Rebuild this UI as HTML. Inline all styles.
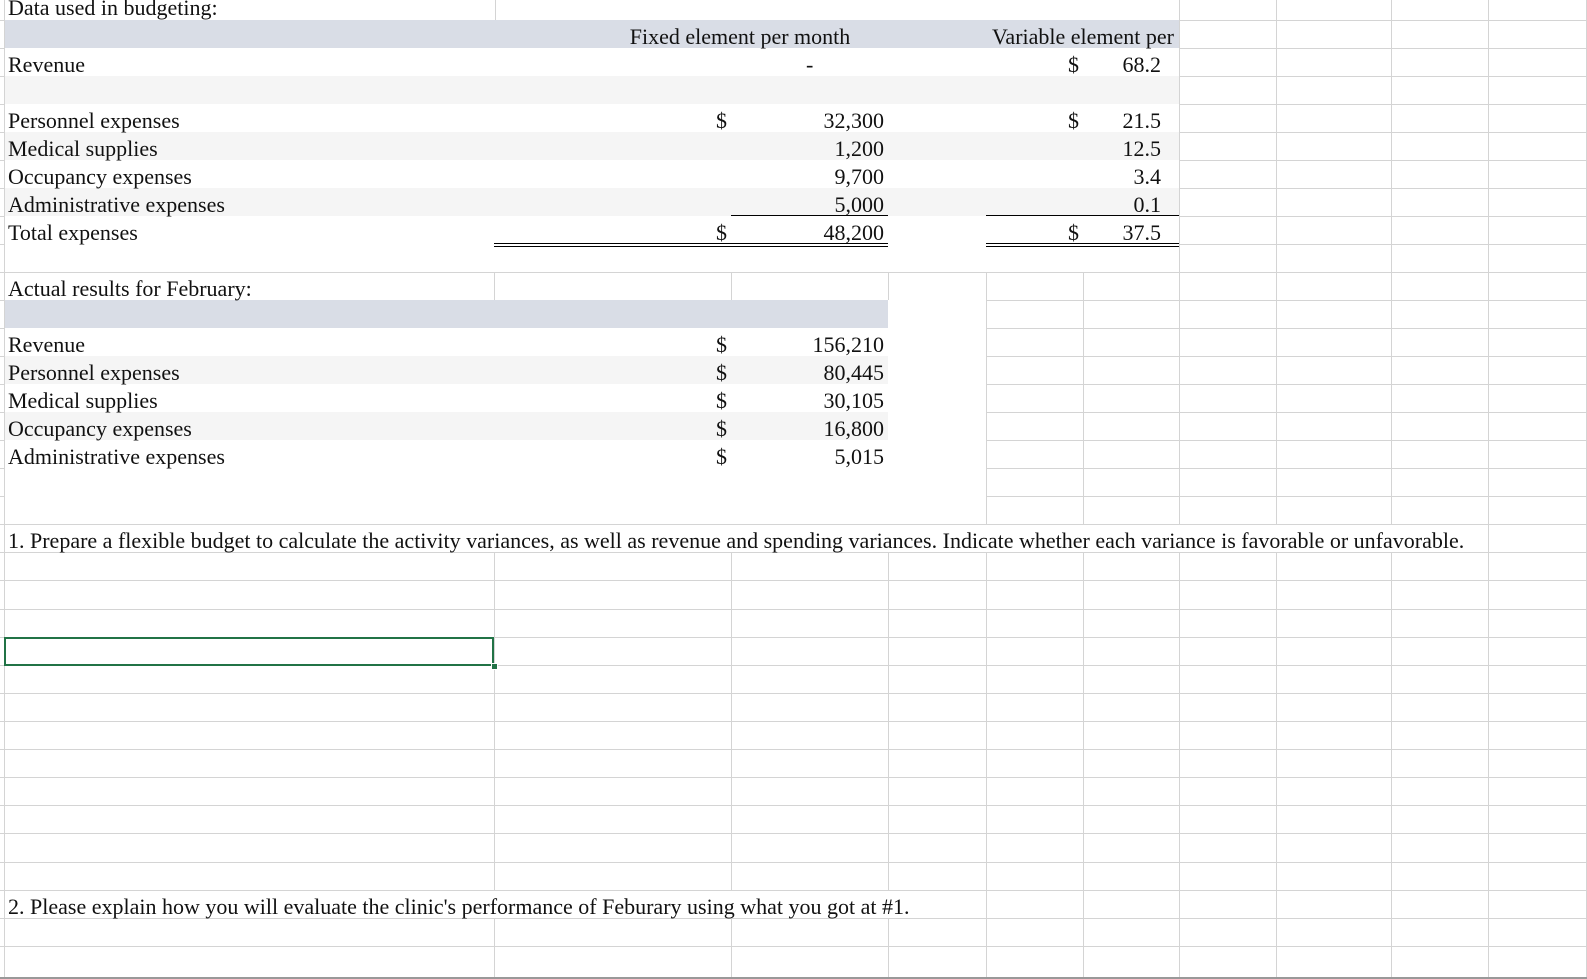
<!DOCTYPE html>
<html><head><meta charset="utf-8">
<style>
html,body{margin:0;padding:0;}
body{width:1587px;height:979px;position:relative;overflow:hidden;background:#fff;font-family:"Liberation Serif","Times New Roman",serif;font-size:22px;color:#111;}
.h{position:absolute;left:0;width:1587px;height:1px;background:#d4d4d4;}
.v{position:absolute;top:0;width:1px;height:979px;background:#d4d4d4;}
.w{position:absolute;background:#fff;}
.b{position:absolute;}
.t{position:absolute;height:28px;line-height:33px;white-space:nowrap;}
.r{text-align:right;}
.c{text-align:center;}
</style></head><body>
<div class="v" style="left:4px"></div>
<div class="v" style="left:494px"></div>
<div class="v" style="left:731px"></div>
<div class="v" style="left:888px"></div>
<div class="v" style="left:986px"></div>
<div class="v" style="left:1083px"></div>
<div class="v" style="left:1179px"></div>
<div class="v" style="left:1276px"></div>
<div class="v" style="left:1391px"></div>
<div class="v" style="left:1488px"></div>
<div class="v" style="left:1586px"></div>
<div class="h" style="top:20px"></div>
<div class="h" style="top:48px"></div>
<div class="h" style="top:76px"></div>
<div class="h" style="top:104px"></div>
<div class="h" style="top:132px"></div>
<div class="h" style="top:160px"></div>
<div class="h" style="top:188px"></div>
<div class="h" style="top:216px"></div>
<div class="h" style="top:244px"></div>
<div class="h" style="top:272px"></div>
<div class="h" style="top:300px"></div>
<div class="h" style="top:328px"></div>
<div class="h" style="top:356px"></div>
<div class="h" style="top:384px"></div>
<div class="h" style="top:412px"></div>
<div class="h" style="top:440px"></div>
<div class="h" style="top:468px"></div>
<div class="h" style="top:496px"></div>
<div class="h" style="top:524px"></div>
<div class="h" style="top:552px"></div>
<div class="h" style="top:580px"></div>
<div class="h" style="top:609px"></div>
<div class="h" style="top:637px"></div>
<div class="h" style="top:665px"></div>
<div class="h" style="top:693px"></div>
<div class="h" style="top:721px"></div>
<div class="h" style="top:749px"></div>
<div class="h" style="top:777px"></div>
<div class="h" style="top:805px"></div>
<div class="h" style="top:833px"></div>
<div class="h" style="top:862px"></div>
<div class="h" style="top:890px"></div>
<div class="h" style="top:918px"></div>
<div class="h" style="top:946px"></div>
<div class="h" style="top:977px;height:2px;background:#999"></div>

<div class="w" style="left:5px;top:0;width:1174px;height:272px"></div>
<div class="w" style="left:5px;top:273px;width:981px;height:251px"></div>
<div class="w" style="left:495px;top:0;width:1px;height:20px;background:#d4d4d4"></div>
<div class="b" style="left:494px;top:272px;width:1px;height:28px;background:#d4d4d4"></div>
<div class="b" style="left:731px;top:272px;width:1px;height:28px;background:#d4d4d4"></div>
<div class="b" style="left:888px;top:272px;width:1px;height:28px;background:#d4d4d4"></div>
<div class="b" style="left:986px;top:272px;width:1px;height:252px;background:#d4d4d4"></div>
<div class="b" style="left:986px;top:300px;width:193px;height:1px;background:#d4d4d4"></div>
<div class="w" style="left:5px;top:525px;width:1482px;height:27px"></div>
<div class="w" style="left:5px;top:891px;width:975px;height:27px"></div>

<div class="b" style="left:5px;top:20px;width:1174px;height:28px;background:#d9dde6"></div>
<div class="b" style="left:5px;top:76px;width:1174px;height:28px;background:#f5f5f5"></div>
<div class="b" style="left:5px;top:132px;width:1174px;height:28px;background:#f5f5f5"></div>
<div class="b" style="left:5px;top:188px;width:1174px;height:28px;background:#f5f5f5"></div>
<div class="b" style="left:5px;top:300px;width:883px;height:28px;background:#d9dde6"></div>
<div class="b" style="left:5px;top:356px;width:883px;height:28px;background:#f5f5f5"></div>
<div class="b" style="left:5px;top:412px;width:883px;height:28px;background:#f5f5f5"></div>

<div class="b" style="left:731px;top:215px;width:157px;height:1px;background:#000"></div>
<div class="b" style="left:986px;top:215px;width:193px;height:1px;background:#000"></div>
<div class="b" style="left:494px;top:243px;width:394px;height:4px;border-top:1px solid #000;border-bottom:1px solid #000;box-sizing:border-box"></div>
<div class="b" style="left:986px;top:243px;width:193px;height:4px;border-top:1px solid #000;border-bottom:1px solid #000;box-sizing:border-box"></div>

<div class="b" style="left:4px;top:637px;width:490px;height:29px;border:2px solid #217346;box-sizing:border-box"></div>
<div class="b" style="left:491px;top:663px;width:5px;height:5px;background:#217346;border:1px solid #fff"></div>

<div class="t" style="left:8px;top:-9px">Data used in budgeting:</div>
<div class="t c" style="left:590px;top:20px;width:300px">Fixed element per month</div>
<div class="t c" style="left:970px;top:20px;width:226px">Variable element per</div>

<div class="t" style="left:8px;top:48px">Revenue</div>
<div class="t" style="left:806px;top:48px">-</div>
<div class="t" style="left:1068px;top:48px">$</div>
<div class="t r" style="left:1080px;top:48px;width:81px">68.2</div>

<div class="t" style="left:8px;top:104px">Personnel expenses</div>
<div class="t" style="left:8px;top:132px">Medical supplies</div>
<div class="t" style="left:8px;top:160px">Occupancy expenses</div>
<div class="t" style="left:8px;top:188px">Administrative expenses</div>
<div class="t" style="left:8px;top:216px">Total expenses</div>

<div class="t" style="left:716px;top:104px">$</div>
<div class="t" style="left:716px;top:216px">$</div>
<div class="t r" style="left:760px;top:104px;width:124px">32,300</div>
<div class="t r" style="left:760px;top:132px;width:124px">1,200</div>
<div class="t r" style="left:760px;top:160px;width:124px">9,700</div>
<div class="t r" style="left:760px;top:188px;width:124px">5,000</div>
<div class="t r" style="left:760px;top:216px;width:124px">48,200</div>

<div class="t" style="left:1068px;top:104px">$</div>
<div class="t" style="left:1068px;top:216px">$</div>
<div class="t r" style="left:1080px;top:104px;width:81px">21.5</div>
<div class="t r" style="left:1080px;top:132px;width:81px">12.5</div>
<div class="t r" style="left:1080px;top:160px;width:81px">3.4</div>
<div class="t r" style="left:1080px;top:188px;width:81px">0.1</div>
<div class="t r" style="left:1080px;top:216px;width:81px">37.5</div>

<div class="t" style="left:8px;top:272px">Actual results for February:</div>

<div class="t" style="left:8px;top:328px">Revenue</div>
<div class="t" style="left:8px;top:356px">Personnel expenses</div>
<div class="t" style="left:8px;top:384px">Medical supplies</div>
<div class="t" style="left:8px;top:412px">Occupancy expenses</div>
<div class="t" style="left:8px;top:440px">Administrative expenses</div>
<div class="t" style="left:716px;top:328px">$</div>
<div class="t" style="left:716px;top:356px">$</div>
<div class="t" style="left:716px;top:384px">$</div>
<div class="t" style="left:716px;top:412px">$</div>
<div class="t" style="left:716px;top:440px">$</div>
<div class="t r" style="left:760px;top:328px;width:124px">156,210</div>
<div class="t r" style="left:760px;top:356px;width:124px">80,445</div>
<div class="t r" style="left:760px;top:384px;width:124px">30,105</div>
<div class="t r" style="left:760px;top:412px;width:124px">16,800</div>
<div class="t r" style="left:760px;top:440px;width:124px">5,015</div>

<div class="t" style="left:8px;top:524px">1. Prepare a flexible budget to calculate the activity variances, as well as revenue and spending variances. Indicate whether each variance is favorable or unfavorable.</div>
<div class="t" style="left:8px;top:890px">2. Please explain how you will evaluate the clinic's performance of Feburary using what you got at #1.</div>
</body></html>
